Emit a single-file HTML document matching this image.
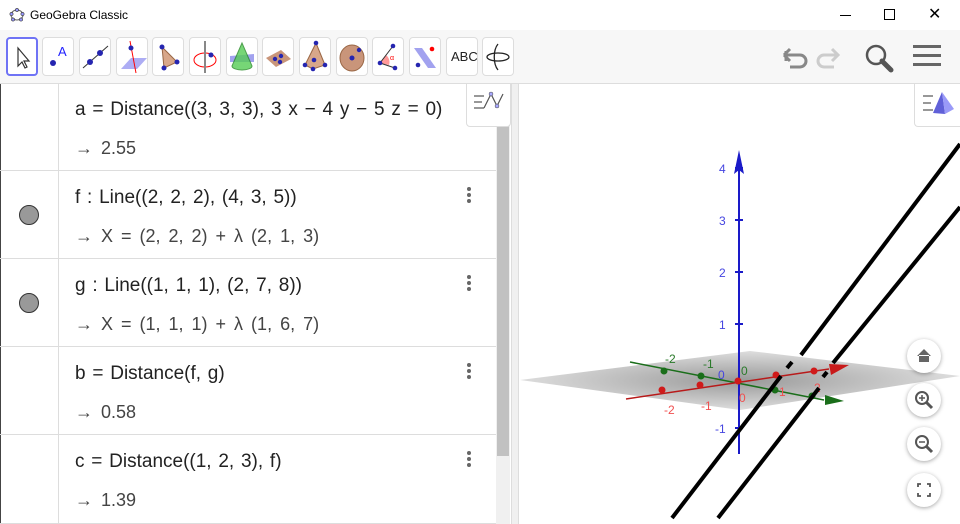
<!DOCTYPE html>
<html><head><meta charset="utf-8"><style>
*{margin:0;padding:0;box-sizing:border-box}
body{width:960px;height:524px;overflow:hidden;background:#fff;font-family:"Liberation Sans",sans-serif;position:relative}
.abs{position:absolute}
.tb{left:0;top:30px;width:960px;height:54px;background:#f7f7f7;border-bottom:1px solid #ddd}
.btn{position:absolute;top:7px;width:32px;height:39px;background:#fff;border:1px solid #ddd;border-radius:4px}
.row{position:absolute;left:0;width:496px;border-bottom:1px solid #ddd}
.t1{position:absolute;left:75px;font-size:19px;color:#222;word-spacing:1.5px;white-space:nowrap}
.t2{position:absolute;left:75px;font-size:18px;color:#444;word-spacing:3px;white-space:nowrap}
.dot{position:absolute;left:19px;width:20px;height:20px;border-radius:50%;background:#999;border:1px solid #333}
.kb{position:absolute;left:467px;width:4px;height:4px;background:#666;border-radius:50%;box-shadow:0 6px #666,0 12px #666}
.cb{position:absolute;left:907px;width:34px;height:34px;border-radius:50%;background:#fff;box-shadow:0 1px 4px rgba(0,0,0,.35)}
</style></head><body>
<div class="abs" style="left:0;top:0;width:960px;height:30px;background:#fff"></div>
<svg class="abs" style="left:9px;top:8px" width="16" height="14"><ellipse cx="8" cy="7" rx="6" ry="5" fill="none" stroke="#666" stroke-width="1"/><g fill="#99f" stroke="#333" stroke-width=".6"><circle cx="8" cy="2" r="1.6"/><circle cx="2.5" cy="6" r="1.6"/><circle cx="13.5" cy="6" r="1.6"/><circle cx="4" cy="11.5" r="1.6"/><circle cx="12" cy="11.5" r="1.6"/></g></svg>
<div class="abs" style="left:30px;top:8px;font-size:12px;color:#000">GeoGebra Classic</div>
<div class="abs" style="left:840px;top:15px;width:11px;height:1px;background:#000"></div>
<div class="abs" style="left:884px;top:9px;width:11px;height:11px;border:1px solid #000"></div>
<div class="abs" style="left:928px;top:7px;font-size:16px;line-height:16px">✕</div>
<div class="abs tb">
<div class="btn" style="left:6px;border:2px solid #6f73f5"><svg width="28" height="35"><path d="M10 9 L10 27 L14 23 L17 29 L19 28 L16 22 L21 22 Z" fill="#fff" stroke="#333" stroke-width="1.2"/></svg></div>
<div class="btn" style="left:42px"><svg width="30" height="37"><circle cx="10" cy="25" r="3" fill="#2525b0"/><text x="15" y="18" font-size="13" fill="#22f">A</text></svg></div>
<div class="btn" style="left:79px"><svg width="30" height="37"><line x1="3" y1="30" x2="28" y2="8" stroke="#333"/><circle cx="10" cy="24" r="3" fill="#2525b0"/><circle cx="20" cy="15" r="3" fill="#2525b0"/></svg></div>
<div class="btn" style="left:116px"><svg width="30" height="37"><path d="M4 31 L14 20 L30 20 L20 31Z" fill="#8a8af0" opacity=".7"/><line x1="13" y1="3" x2="19" y2="35" stroke="red"/><circle cx="14" cy="10" r="2.5" fill="#2525b0"/></svg></div>
<div class="btn" style="left:152px"><svg width="30" height="37"><path d="M9 9 L24 24 L11 30Z" fill="#d8a78a" stroke="#964" /><circle cx="9" cy="9" r="2.5" fill="#2525b0"/><circle cx="24" cy="24" r="2.5" fill="#2525b0"/><circle cx="11" cy="30" r="2.5" fill="#2525b0"/></svg></div>
<div class="btn" style="left:189px"><svg width="30" height="37"><ellipse cx="15" cy="22" rx="11" ry="7" fill="none" stroke="red"/><line x1="15" y1="3" x2="15" y2="35" stroke="#888" stroke-width="2"/><circle cx="21" cy="17" r="2.5" fill="#2525b0"/></svg></div>
<div class="btn" style="left:226px"><svg width="30" height="37"><path d="M3 18 L27 16 L27 24 L3 24Z" fill="#7a7ae8" opacity=".7"/><path d="M15 5 L5 28 A10 4 0 0 0 25 28Z" fill="#5c5" opacity=".8" stroke="#282"/></svg></div>
<div class="btn" style="left:262px"><svg width="30" height="37"><path d="M3 20 L18 12 L28 21 L13 29Z" fill="#c9957a"/><circle cx="12" cy="21" r="2.2" fill="#2525b0"/><circle cx="18" cy="18" r="2.2" fill="#2525b0"/><circle cx="17" cy="24" r="2.2" fill="#2525b0"/></svg></div>
<div class="btn" style="left:299px"><svg width="30" height="37"><path d="M16 5 L5 27 L13 31 L25 27Z" fill="#d8a78a" stroke="#964"/><g fill="#2525b0"><circle cx="16" cy="5" r="2.3"/><circle cx="5" cy="27" r="2.3"/><circle cx="13" cy="31" r="2.3"/><circle cx="25" cy="27" r="2.3"/><circle cx="14" cy="22" r="2.3"/></g></svg></div>
<div class="btn" style="left:336px"><svg width="30" height="37"><ellipse cx="15" cy="20" rx="12" ry="13" fill="#c9957a" stroke="#964"/><circle cx="15" cy="20" r="2.5" fill="#2525b0"/><circle cx="22" cy="12" r="2.2" fill="#2525b0"/></svg></div>
<div class="btn" style="left:372px"><svg width="30" height="37"><path d="M7 25 L13 17 A9 9 0 0 1 16 27Z" fill="#f99"/><line x1="7" y1="25" x2="20" y2="8" stroke="#333"/><line x1="7" y1="25" x2="22" y2="30" stroke="#333"/><g fill="#2525b0"><circle cx="7" cy="25" r="2.3"/><circle cx="20" cy="8" r="2.3"/><circle cx="22" cy="30" r="2.3"/></g><text x="17" y="22" font-size="7" fill="red">α</text></svg></div>
<div class="btn" style="left:409px"><svg width="30" height="37"><path d="M4 10 L12 10 L26 30 L18 30Z" fill="#7a7ae8" opacity=".7"/><circle cx="8" cy="27" r="2.3" fill="#2525b0"/><circle cx="22" cy="11" r="2.3" fill="red"/></svg></div>
<div class="btn" style="left:446px"><div style="font-size:13px;margin:11px 0 0 4px;color:#222">ABC</div></div>
<div class="btn" style="left:482px"><svg width="30" height="37"><ellipse cx="15" cy="19" rx="11" ry="4" fill="none" stroke="#222" stroke-width="1.3"/><path d="M15 6 C10 12 10 26 15 32" fill="none" stroke="#222" stroke-width="1.3"/></svg></div>
<svg class="abs" style="left:780px;top:13px" width="60" height="30"><path d="M6 8 L6 18 M4 12 L10 6 M4 12 L10 18" fill="none" stroke="#888" stroke-width="3"/><path d="M6 12 L20 12 A6 6 0 0 1 20 24 L10 24" fill="none" stroke="#888" stroke-width="3"/><path d="M58 12 L44 12 A6 6 0 0 0 44 24 L54 24 M52 6 L58 12 L52 18" fill="none" stroke="#ccc" stroke-width="3"/></svg>
<svg class="abs" style="left:864px;top:13px" width="32" height="32"><circle cx="12" cy="12" r="9" fill="none" stroke="#555" stroke-width="2.5"/><line x1="18" y1="18" x2="27" y2="27" stroke="#555" stroke-width="5" stroke-linecap="round"/></svg>
<div class="abs" style="left:913px;top:15px;width:28px;height:3px;background:#666;box-shadow:0 9px #666,0 18px #666"></div>
</div>
<div class="abs" style="left:0;top:84px;width:1px;height:440px;background:#444"></div>
<div class="abs" style="left:58px;top:84px;width:1px;height:440px;background:#ddd"></div>
<div class="row" style="top:84px;height:87px"><div class="t1" style="top:15px">a = Distance((3, 3, 3), 3 x − 4 y − 5 z = 0)</div><div class="t2" style="top:54px">→ 2.55</div></div>
<div class="row" style="top:171px;height:88px"><div class="dot" style="top:34px"></div><div class="kb" style="top:16px"></div><div class="t1" style="top:16px">f : Line((2, 2, 2), (4, 3, 5))</div><div class="t2" style="top:55px">→ X = (2, 2, 2) + λ (2, 1, 3)</div></div>
<div class="row" style="top:259px;height:88px"><div class="dot" style="top:34px"></div><div class="kb" style="top:16px"></div><div class="t1" style="top:16px">g : Line((1, 1, 1), (2, 7, 8))</div><div class="t2" style="top:55px">→ X = (1, 1, 1) + λ (1, 6, 7)</div></div>
<div class="row" style="top:347px;height:88px"><div class="kb" style="top:16px"></div><div class="t1" style="top:16px">b = Distance(f, g)</div><div class="t2" style="top:55px">→ 0.58</div></div>
<div class="row" style="top:435px;height:89px"><div class="kb" style="top:16px"></div><div class="t1" style="top:16px">c = Distance((1, 2, 3), f)</div><div class="t2" style="top:55px">→ 1.39</div></div>
<div class="abs" style="left:496px;top:84px;width:14px;height:440px;background:#f0f0f0"></div>
<div class="abs" style="left:497px;top:126px;width:12px;height:330px;background:#c1c1c1"></div>
<div class="abs" style="left:466px;top:84px;width:45px;height:43px;background:#fff;border:1px solid #ddd;border-top:none;border-radius:0 0 4px 4px"><svg width="45" height="42"><path d="M7 12 H17 M7 18 H15 M7 24 H17" stroke="#777" stroke-width="1.5"/><path d="M17 24 L24 10 L30 22 L36 10" fill="none" stroke="#555" stroke-width="1.2"/><circle cx="24" cy="10" r="2" fill="#aaf" stroke="#444" stroke-width=".5"/><circle cx="30" cy="22" r="2" fill="#aaf" stroke="#444" stroke-width=".5"/></svg></div>
<div class="abs" style="left:511px;top:84px;width:8px;height:440px;background:#f0f0f0;border-left:1px solid #ddd;border-right:1px solid #ddd"></div>
<svg class="abs" style="left:519px;top:84px" width="441" height="440">
<defs><radialGradient id="g" cx=".5" cy=".5" r=".5"><stop offset="0" stop-color="#999"/><stop offset="1" stop-color="#ddd"/></radialGradient></defs>
<path d="M1 296 L231 267 L441 292 L221 326Z" fill="url(#g)"/>
<line x1="220" y1="72" x2="220" y2="370" stroke="#1a1ac8" stroke-width="2"/>
<path d="M220 66 L215 90 L220 86 L225 90Z" fill="#1a1ac8"/>
<g stroke="#1a1ac8" stroke-width="2"><line x1="216" y1="84" x2="224" y2="84"/><line x1="216" y1="136" x2="224" y2="136"/><line x1="216" y1="188" x2="224" y2="188"/><line x1="216" y1="240" x2="224" y2="240"/><line x1="216" y1="344" x2="224" y2="344"/></g>
<g font-size="12" fill="#4545e0" font-family="Liberation Sans"><text x="200" y="89">4</text><text x="200" y="141">3</text><text x="200" y="193">2</text><text x="200" y="245">1</text><text x="196" y="349">-1</text><text x="199" y="295">0</text></g>
<line x1="111" y1="278" x2="305" y2="316" stroke="#1a6e1a" stroke-width="1.5"/><path d="M325 317 L306 311 L306 321Z" fill="#1a6e1a"/>
<line x1="107" y1="315" x2="310" y2="285" stroke="#b81a1a" stroke-width="1.5"/><path d="M330 281 L310 280 L312 291Z" fill="#c81a1a"/>
<g fill="#1a6e1a"><circle cx="145" cy="287" r="3.5"/><circle cx="182" cy="292" r="3.5"/><circle cx="256" cy="306" r="3.5"/><circle cx="293" cy="312" r="3.5"/></g>
<g fill="#d01a1a"><circle cx="143" cy="306" r="3.5"/><circle cx="181" cy="301" r="3.5"/><circle cx="219" cy="297" r="3.5"/><circle cx="257" cy="291" r="3.5"/><circle cx="295" cy="287" r="3.5"/></g>
<g font-size="12" font-family="Liberation Sans" fill="#2a7a2a"><text x="146" y="279">-2</text><text x="184" y="284">-1</text><text x="222" y="291">0</text></g>
<g font-size="12" font-family="Liberation Sans" fill="#f05050"><text x="145" y="330">-2</text><text x="182" y="326">-1</text><text x="220" y="318">0</text><text x="260" y="312">1</text><text x="295" y="308">2</text></g>
<g stroke="#000" stroke-width="4"><line x1="153" y1="434" x2="262" y2="292"/><line x1="268" y1="284" x2="273" y2="278"/><line x1="282" y1="271" x2="441" y2="60"/><line x1="199" y1="434" x2="300" y2="304"/><line x1="304" y1="293" x2="308" y2="288"/><line x1="314" y1="279" x2="441" y2="123"/></g>
</svg>
<div class="abs" style="left:914px;top:84px;width:46px;height:43px;background:#fff;border:1px solid #ddd;border-top:none;border-right:none;border-radius:0 0 0 4px"><svg width="46" height="42"><path d="M8 12 H18 M8 19 H16 M8 26 H18" stroke="#777" stroke-width="1.5"/><path d="M27 8 L18 29 L30 30Z" fill="#6060d8"/><path d="M27 8 L30 30 L39 25Z" fill="#9a9af8"/></svg></div>
<div class="cb" style="top:339px"><svg width="34" height="34"><path d="M10 17 L17 10 L24 17 M12 16 V23 H22 V16" fill="#666"/></svg></div>
<div class="cb" style="top:383px"><svg width="34" height="34"><circle cx="15" cy="15" r="6" fill="none" stroke="#555" stroke-width="2"/><line x1="19" y1="19" x2="25" y2="25" stroke="#555" stroke-width="3"/><path d="M12 15 H18 M15 12 V18" stroke="#555" stroke-width="1.5"/></svg></div>
<div class="cb" style="top:427px"><svg width="34" height="34"><circle cx="15" cy="15" r="6" fill="none" stroke="#555" stroke-width="2"/><line x1="19" y1="19" x2="25" y2="25" stroke="#555" stroke-width="3"/><path d="M12 15 H18" stroke="#555" stroke-width="1.5"/></svg></div>
<div class="cb" style="top:473px"><svg width="34" height="34"><path d="M11 14 V11 H14 M20 11 H23 V14 M23 20 V23 H20 M14 23 H11 V20" fill="none" stroke="#555" stroke-width="1.8"/></svg></div>
</body></html>
